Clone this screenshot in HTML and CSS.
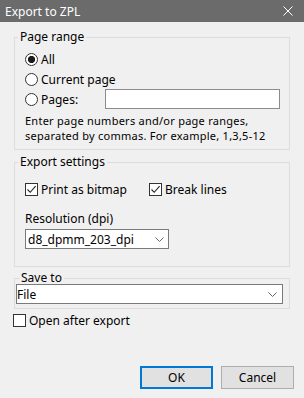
FILE: index.html
```html
<!DOCTYPE html>
<html lang="en">
<head>
  <meta charset="UTF-8">
  <meta name="viewport" content="width=device-width, initial-scale=1.0">
  <title>Export to ZPL</title>
  <link rel="stylesheet" href="styles.css">
</head>
<body>
  <div class="titlebar">
    <span class="title">Export to ZPL</span>
    <svg class="close" width="10" height="10" viewBox="0 0 10 10"><path d="M0.5 0.5 L9.5 9.5 M9.5 0.5 L0.5 9.5" stroke="#fff" stroke-width="1" fill="none"/></svg>
  </div>

  <div class="content">
    <fieldset class="group range">
      <legend>Page range</legend>
      <div class="group-body">
        <div class="row"><span class="radio checked"></span>All</div>
        <div class="row"><span class="radio"></span>Current page</div>
        <div class="row"><span class="radio"></span><span class="pages-lbl">Pages:</span><span class="textbox"></span></div>
        <p class="hint">Enter page numbers and/or page ranges,<br>separated by commas. For example, 1,3,5-12</p>
      </div>
    </fieldset>

    <fieldset class="group settings">
      <legend>Export settings</legend>
      <div class="group-body">
        <div class="row">
          <span class="check-item first"><span class="checkbox checked"><svg width="11" height="11" viewBox="0 0 11 11"><path d="M1.5 5.5 L4.2 8.3 L9.6 2.2" stroke="#222" stroke-width="1.1" fill="none"/></svg></span>Print as bitmap</span>
          <span class="check-item"><span class="checkbox checked"><svg width="11" height="11" viewBox="0 0 11 11"><path d="M1.5 5.5 L4.2 8.3 L9.6 2.2" stroke="#222" stroke-width="1.1" fill="none"/></svg></span>Break lines</span>
        </div>
        <div class="field-lbl">Resolution (dpi)</div>
        <div class="combo res">
          <span>d8_dpmm_203_dpi</span>
          <svg width="9" height="5" viewBox="0 0 9 5"><path d="M0.5 0.5 L4.5 4.5 L8.5 0.5" stroke="#666" stroke-width="1" fill="none"/></svg>
        </div>
      </div>
    </fieldset>

    <fieldset class="group save">
      <legend>Save to</legend>
      <div class="combo save-combo">
        <span>File</span>
        <svg width="9" height="5" viewBox="0 0 9 5"><path d="M0.5 0.5 L4.5 4.5 L8.5 0.5" stroke="#666" stroke-width="1" fill="none"/></svg>
      </div>
    </fieldset>

    <div class="row open-after"><span class="checkbox"></span>Open after export</div>
  </div>

  <div class="footer">
    <button class="btn default">OK</button>
    <button class="btn">Cancel</button>
  </div>
</body>
</html>
```

FILE: styles.css
```css
* {
  box-sizing: border-box;
}
html, body {
  margin: 0;
  padding: 0;
}
body {
  width: 304px;
  height: 398px;
  overflow: hidden;
  background: #f0f0f0;
  font-family: "Noto Sans", sans-serif;
  font-size: 12px;
  color: #000;
}

/* window title */
.titlebar {
  height: 22px;
  background: #6b6b6b;
  color: #fff;
  display: flex;
  align-items: center;
  justify-content: space-between;
  padding: 0 11px 0 5px;
}
.close {
  display: block;
}

.content {
  padding: 8px 14px 0 14px;
}

/* group boxes */
.group {
  margin: 0;
  padding: 0;
  min-width: 0;
  border: 1px solid #dcdcdc;
}
.group legend {
  margin-left: 3px;
  padding: 0 2px;
  line-height: 14px;
}
.group-body {
  padding: 0 6px 0 10px;
}

.range .group-body {
  padding-top: 5px;
  padding-bottom: 6px;
}
.settings {
  margin-top: 5px;
}
.settings .group-body {
  padding-top: 10px;
  padding-bottom: 17px;
}
.save {
  margin-top: 4px;
  padding: 0 6px 4px 1px;
}

.row {
  display: flex;
  align-items: center;
  height: 20px;
}

.radio {
  width: 13px;
  height: 13px;
  border: 1px solid #333;
  border-radius: 50%;
  background: #fff;
  margin-right: 3px;
  flex: none;
}
.radio.checked {
  background: radial-gradient(circle, #1a1a1a 3.3px, #fff 3.9px);
}

.pages-lbl {
  width: 64px;
}
.textbox {
  width: 175px;
  height: 20px;
  background: #fff;
  border: 1px solid #8c8c8c;
}

.hint {
  margin: 4px 0 0 0;
  font-size: 11px;
  letter-spacing: 0.25px;
  line-height: 15px;
}

.checkbox {
  width: 13px;
  height: 13px;
  border: 1px solid #333;
  background: #fff;
  margin-right: 3px;
  flex: none;
  display: flex;
  align-items: center;
  justify-content: center;
}
.checkbox svg {
  display: block;
}
.check-item {
  display: flex;
  align-items: center;
}
.check-item.first {
  width: 124px;
}

.field-lbl {
  margin-top: 12px;
  line-height: 16px;
}

/* drop-down lists */
.combo {
  height: 20px;
  background: #fff;
  border: 1px solid #7a7a7a;
  display: flex;
  align-items: center;
  justify-content: space-between;
}
.combo svg {
  display: block;
}
.res {
  margin-top: 2px;
  width: 144px;
  padding: 0 4px 0 2px;
}
.save-combo {
  margin-top: -1px;
  padding: 0 5px 0 0;
}

.open-after {
  margin-top: 1px;
  margin-left: -1px;
}

/* dialog buttons */
.footer {
  display: flex;
  justify-content: flex-end;
  gap: 8px;
  padding-right: 10px;
  margin-top: 36px;
}
.btn {
  width: 73px;
  height: 23px;
  background: #e1e1e1;
  border: 1px solid #adadad;
  font-family: inherit;
  font-size: 12px;
  color: #000;
  padding: 0;
}
.btn.default {
  border: 2px solid #0078d7;
}
```
